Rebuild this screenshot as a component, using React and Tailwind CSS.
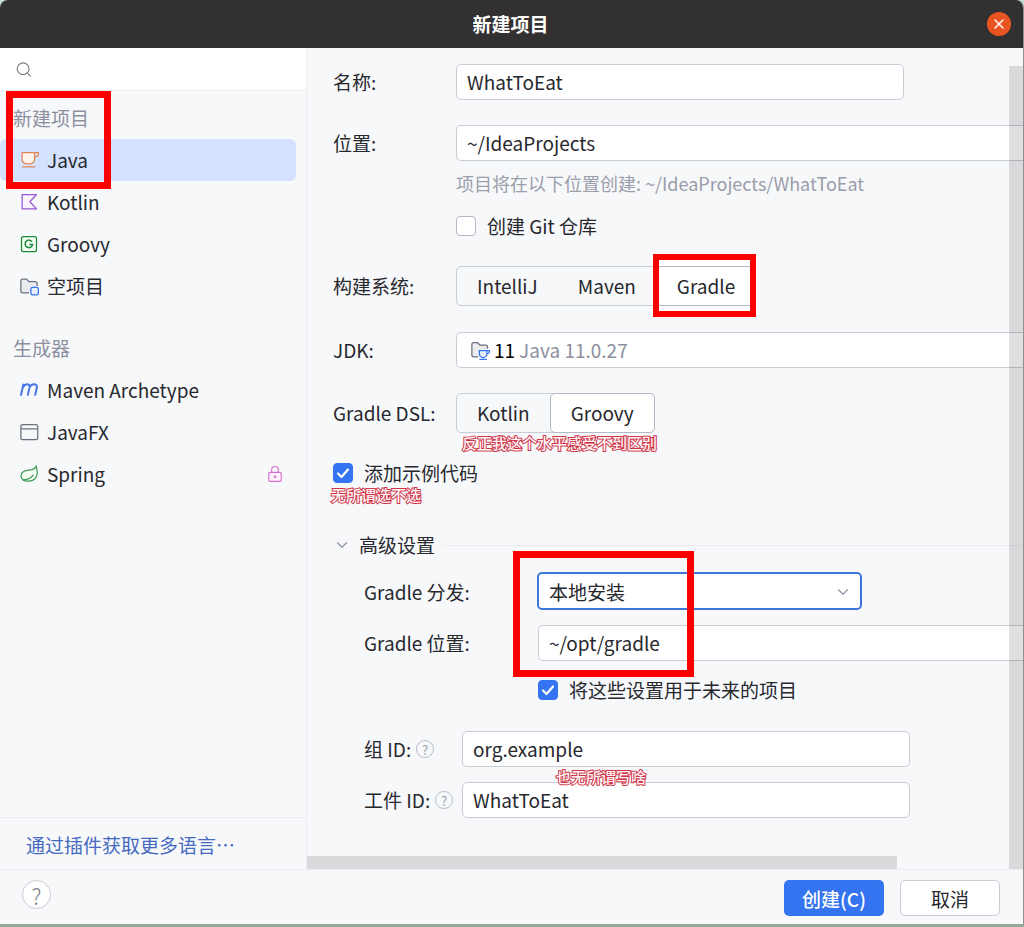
import { Search, X, ChevronDown } from "lucide-react";

const svg = { width: 20, height: 20, viewBox: "0 0 16 16", fill: "none", "aria-hidden": true };

const JavaIcon = () => (
  <svg {...svg}>
    <path d="M2.5 2h10v5.500a3.500 3.500 0 0 1-3.500 3.500h-3A3.500 3.500 0 0 1 2.500 7.500z" fill="#fff4eb" stroke="#e08855" />
    <path d="M12.500 2h3v1a2.500 2.500 0 0 1-2.500 2.500h-.5" stroke="#e08855" />
    <path d="M2.500 13.500h10.500" stroke="#e08855" />
  </svg>
);
const KotlinIcon = () => (
  <svg {...svg}>
    <path d="M2.500 2h11.500L8.700 7.800l5.300 5.700H2.500z" fill="#faf5ff" stroke="#955ad0" strokeLinejoin="round" />
  </svg>
);
const GroovyIcon = () => (
  <svg {...svg}>
    <rect x="2" y="2" width="12" height="12" rx="1.500" fill="#f2fcf3" stroke="#208a3c" />
    <path d="M10.400 6.200A3 3 0 1 0 10.900 8.300H8.300" stroke="#208a3c" strokeWidth="1.200" />
  </svg>
);
const EmptyIcon = () => (
  <svg {...svg}>
    <path d="M8 13.500H3A1.500 1.500 0 0 1 1.500 12V4A1.500 1.500 0 0 1 3 2.500h3l2 2h5A1.500 1.500 0 0 1 14.500 6v2" fill="#ebecf0" stroke="#6c707e" />
    <rect x="9.500" y="9" width="6" height="6" rx="1.500" fill="#e7effd" stroke="#3574f0" />
  </svg>
);
const MavenIcon = () => (
  <svg {...svg}>
    <path d="M1.500 12.500 3.600 3M3 6C4 4 5.200 3.300 6.500 3.300c1.600 0 2.200 1 1.900 2.600L7 12.500M8.300 6c1-2 2.300-2.700 3.700-2.700 1.800 0 2.600 1.100 2.200 2.900L12.900 12.500" stroke="#4878e8" strokeWidth="1.600" />
  </svg>
);
const FxIcon = () => (
  <svg {...svg}>
    <rect x="1.500" y="2" width="13.500" height="12" rx="1.500" stroke="#6c707e" />
    <path d="M1.500 5.500h13.500" stroke="#6c707e" />
  </svg>
);
const SpringIcon = () => (
  <svg {...svg}>
    <path d="M13.700 1.800c1.400 4 1.200 7.700-.9 10-2.200 2.300-7.300 2.600-9.600.9C.800 10.800 1.200 7.200 4 5.800c2.300-1.100 4.400-.6 6.600-1.300 1.500-.500 2.500-1.300 3.100-2.700z" fill="#f2fcf3" stroke="#3f9a55" />
    <path d="M3 12.600c3.600.2 6.500-1.100 8.500-3.900" stroke="#3f9a55" />
  </svg>
);
const JdkIcon = () => (
  <svg {...svg}>
    <path d="M6.500 13.500H3A1.500 1.500 0 0 1 1.500 12V3.500A1.500 1.500 0 0 1 3 2h3l2 2h4.500A1.500 1.500 0 0 1 14 5.500V7" fill="#ebecf0" stroke="#6c707e" />
    <path d="M7.500 8.500h6V11a3 3 0 0 1-6 0z" fill="#e7effd" stroke="#3574f0" />
    <path d="M13.500 8.500h2v.6a1.900 1.900 0 0 1-2 1.900M7.500 15.500h6" stroke="#3574f0" />
  </svg>
);
const LockIcon = () => (
  <svg width="18" height="18" viewBox="0 0 16 16" fill="none" role="img" aria-label="Ultimate">
    <rect x="2.500" y="6.500" width="11" height="8" rx="1.200" fill="#fdf0fb" stroke="#d770cc" />
    <path d="M5 6.500V4.300a3 3 0 0 1 6 0v2.200" stroke="#d770cc" />
    <circle cx="8" cy="10.500" r="1.200" fill="#d770cc" />
  </svg>
);

const Item = ({ icon, children, selected, trailing }) => (
  <li>
    <button
      type="button"
      aria-pressed={!!selected}
      className={`flex h-[42px] w-full items-center gap-2 rounded-md pr-3 pl-[19px] text-left ${selected ? "bg-[#d4e2ff]" : ""}`}
    >
      {icon}
      <span className="flex-1">{children}</span>
      {trailing}
    </button>
  </li>
);

const box = "h-9 rounded-[5px] border border-[#c9ccd6] bg-white outline-none";
const field = `${box} px-[10px] pb-[2px]`;

const Check = ({ id, checked, children }) => (
  <div className="flex h-7 items-center gap-[11px]">
    <span className="relative flex size-5 shrink-0">
      <input
        id={id}
        type="checkbox"
        defaultChecked={checked}
        className="peer size-5 appearance-none rounded-[4px] border border-[#b4b8c4] bg-white checked:border-[#3574f0] checked:bg-[#3574f0]"
      />
      <svg viewBox="0 0 20 20" className="pointer-events-none absolute inset-0 hidden size-5 peer-checked:block" fill="none" aria-hidden="true">
        <path d="m5 10.500 3.500 3.500L15 6.500" stroke="#fff" strokeWidth="2.200" strokeLinecap="round" strokeLinejoin="round" />
      </svg>
    </span>
    <label htmlFor={id}>{children}</label>
  </div>
);

const Note = ({ className, children }) => (
  <span className={`pointer-events-none absolute z-10 text-[15px] leading-5 font-medium whitespace-nowrap text-[#fff5f5] [-webkit-text-stroke:2px_#d0364a] [paint-order:stroke_fill] ${className}`}>
    {children}
  </span>
);

const Segment = ({ selected, children }) => (
  <button
    type="button"
    aria-pressed={!!selected}
    className={`relative -my-px h-10 px-5 ${selected ? "-mr-px rounded-[5px] border border-[#b4b8c4] bg-white" : ""}`}
  >
    {children}
  </button>
);

const Help = () => (
  <button type="button" aria-label="帮助" className="flex size-[18px] items-center justify-center rounded-full border border-[#b9bcc8] text-[13px] leading-none text-[#9a9daa]">
    ?
  </button>
);

export default function App() {
  return (
    <div className="flex min-h-screen flex-col border-b-[3px] border-[#93a899] bg-[#c3dccb] font-['Noto_Sans_CJK_SC','Noto_Sans',sans-serif] text-[19px] leading-7 text-[#27282e]">
      <div className="flex flex-1 flex-col overflow-hidden rounded-t-lg border-r border-[#8f9092] bg-[#f7f8fa]">
        <header className="flex h-12 items-center bg-[#333031] pr-3 pl-[10px] text-white">
          <span className="w-6" />
          <h1 className="flex-1 text-center font-bold">新建项目</h1>
          <button type="button" aria-label="关闭" className="flex size-6 items-center justify-center rounded-full bg-[#e95420]">
            <X size={16} strokeWidth={2} />
          </button>
        </header>

        <div className="flex flex-1">
          <aside className="flex w-[307px] shrink-0 flex-col border-r border-[#ebecf0]">
            <label className="flex h-[43px] items-center border-b border-[#ebecf0] bg-white px-[15px]">
              <Search size={19} strokeWidth={1.600} className="text-[#7b7e8a]" />
              <input type="search" aria-label="搜索" className="w-full bg-transparent px-2 outline-none" />
            </label>
            <nav className="relative flex-1 pt-[6px] pr-[10px]">
              <h2 className="flex h-[42px] items-center pl-[13px] text-[#8c8fa0]">新建项目</h2>
              <ul>
                <Item icon={<JavaIcon />} selected>Java</Item>
                <Item icon={<KotlinIcon />}>Kotlin</Item>
                <Item icon={<GroovyIcon />}>Groovy</Item>
                <Item icon={<EmptyIcon />}>空项目</Item>
              </ul>
              <h2 className="mt-5 flex h-[42px] items-center pl-[13px] text-[#8c8fa0]">生成器</h2>
              <ul>
                <Item icon={<MavenIcon />}>Maven Archetype</Item>
                <Item icon={<FxIcon />}>JavaFX</Item>
                <Item icon={<SpringIcon />} trailing={<LockIcon />}>Spring</Item>
              </ul>
              <span className="pointer-events-none absolute top-0 left-[6px] h-[98px] w-[105px] border-[7px] border-[#fb0000]" />
            </nav>
            <div className="border-t border-[#ebecf0] pt-[13px] pb-[10px] pl-[26px]">
              <a href="#plugins" className="text-[#4469c0]">通过插件获取更多语言…</a>
            </div>
          </aside>

          <main className="relative flex min-w-0 flex-1 flex-col overflow-hidden">
            <form className="flex-1 pt-4 pb-9 pl-[26px]">
              <div className="flex items-center">
                <label htmlFor="name" className="w-[123px] shrink-0">名称:</label>
                <input id="name" defaultValue="WhatToEat" className={`${field} w-[448px]`} />
              </div>
              <div className="mt-[25px] flex items-center">
                <label htmlFor="location" className="w-[123px] shrink-0">位置:</label>
                <input id="location" defaultValue="~/IdeaProjects" className={`${field} min-w-0 flex-1 rounded-r-none border-r-0`} />
              </div>
              <div className="pl-[123px]">
                <p className="mt-2 text-[18px] whitespace-nowrap text-[#9a9daa]">项目将在以下位置创建: ~/IdeaProjects/WhatToEat</p>
                <div className="mt-[15px]">
                  <Check id="git">创建 Git 仓库</Check>
                </div>
              </div>
              <div className="mt-[26px] flex items-center">
                <span className="w-[123px] shrink-0">构建系统:</span>
                <div className="relative flex h-10 rounded-[5px] border border-[#c9ccd6]">
                  <span className="pointer-events-none absolute -top-[13px] -right-px h-[63px] w-[103px] bg-white" />
                  <Segment>IntelliJ</Segment>
                  <Segment>Maven</Segment>
                  <Segment selected>Gradle</Segment>
                  <span className="pointer-events-none absolute -top-[13px] -right-px h-[63px] w-[103px] border-[6px] border-[#fb0000]" />
                </div>
              </div>
              <div className="mt-[26px] flex items-center">
                <span className="w-[123px] shrink-0">JDK:</span>
                <button type="button" aria-label="JDK" className={`${box} flex min-w-0 flex-1 items-center rounded-r-none border-r-0 pl-[13px]`}>
                  <JdkIcon />
                  <span className="ml-1 text-black">11</span>
                  <span className="ml-1 text-[#8c8fa0]">Java 11.0.27</span>
                </button>
              </div>
              <div className="relative mt-[25px] flex items-center">
                <span className="w-[123px] shrink-0">Gradle DSL:</span>
                <div className="flex h-10 rounded-[5px] border border-[#c9ccd6]">
                  <Segment>Kotlin</Segment>
                  <Segment selected>Groovy</Segment>
                </div>
                <Note className="top-full left-[129px]">反正我这个水平感受不到区别</Note>
              </div>
              <div className="relative mt-[26px]">
                <Check id="sample" checked>添加示例代码</Check>
                <Note className="top-[26px] -left-[2px]">无所谓选不选</Note>
              </div>

              <div className="mt-11 flex items-center">
                <button type="button" aria-expanded="true" className="flex items-center gap-2">
                  <ChevronDown size={18} strokeWidth={1.500} className="text-[#8c8fa0]" />
                  高级设置
                </button>
                <span className="ml-2 h-px flex-1 bg-[#ebecf0]" />
              </div>

              <div className="pl-[31px]">
                <div className="relative mt-[13px]">
                  <div className="flex items-center">
                    <label htmlFor="dist" className="w-[173px] shrink-0 pt-[2px]">Gradle 分发:</label>
                    <span className="relative flex">
                      <select id="dist" className="h-[38px] w-[325px] appearance-none rounded-[5px] border-2 border-[#3f76dc] bg-white px-[10px] pt-[2px] outline-none">
                        <option>本地安装</option>
                      </select>
                      <ChevronDown size={18} strokeWidth={1.500} className="pointer-events-none absolute top-[11px] right-[10px] text-[#8c8fa0]" />
                    </span>
                  </div>
                  <div className="mt-[15px] flex items-center">
                    <label htmlFor="gradle" className="w-[174px] shrink-0">Gradle 位置:</label>
                    <input id="gradle" defaultValue="~/opt/gradle" className={`${field} min-w-0 flex-1 rounded-r-none border-r-0`} />
                  </div>
                  <span className="pointer-events-none absolute -top-[21px] left-[149px] h-[126px] w-[181px] border-[7px] border-[#fb0000]" />
                </div>
                <div className="mt-[15px] pl-[174px]">
                  <Check id="future" checked>将这些设置用于未来的项目</Check>
                </div>
                <div className="relative mt-[27px] flex items-center">
                  <div className="flex w-[98px] shrink-0 items-center gap-[5px]">
                    <label htmlFor="group">组 ID:</label>
                    <Help />
                  </div>
                  <input id="group" defaultValue="org.example" className={`${field} w-[448px]`} />
                  <Note className="top-full left-[192px]">也无所谓写啥</Note>
                </div>
                <div className="mt-[15px] flex items-center">
                  <div className="flex w-[98px] shrink-0 items-center gap-[5px]">
                    <label htmlFor="artifact">工件 ID:</label>
                    <Help />
                  </div>
                  <input id="artifact" defaultValue="WhatToEat" className={`${field} w-[448px]`} />
                </div>
              </div>
            </form>
            <div className="mr-[126px] h-[13px] bg-[#d9dadb]" />
            <div className="pointer-events-none absolute top-[18px] right-0 bottom-0 w-[14px] bg-black/12" />
          </main>
        </div>

        <footer className="flex h-[55px] items-start gap-4 border-t border-[#ebecf0] pt-[10px] pr-[23px] pl-[22px]">
          <button type="button" aria-label="帮助" className="flex size-[29px] items-center justify-center rounded-full border border-[#c9ccd6] bg-white text-[22px] font-light text-[#7b7e8a]">
            ?
          </button>
          <span className="flex-1" />
          <button type="button" className="h-9 w-[100px] rounded-[5px] bg-[#3574f0] pt-px font-medium text-white">创建(C)</button>
          <button type="button" className="h-9 w-[100px] rounded-[5px] border border-[#c9ccd6] bg-white pt-px">取消</button>
        </footer>
      </div>
    </div>
  );
}
